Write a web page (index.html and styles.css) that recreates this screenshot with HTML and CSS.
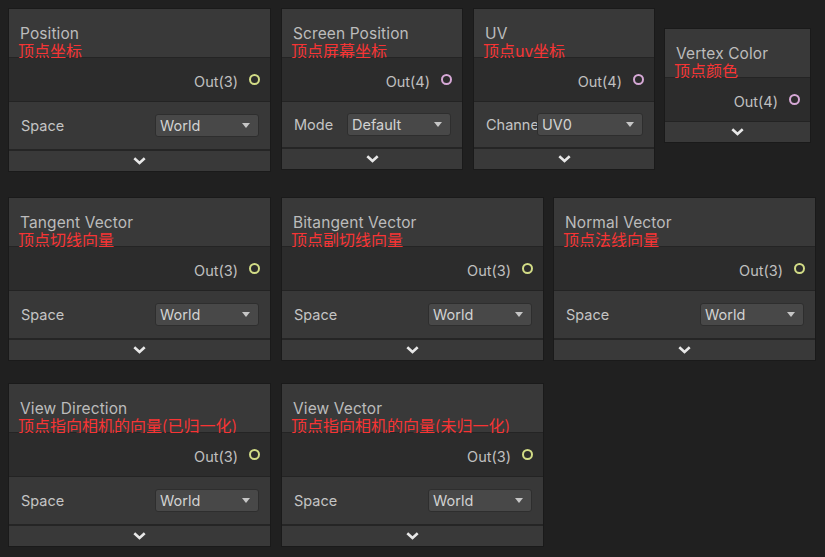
FILE: index.html
```html
<!DOCTYPE html>
<html>
<head>
<meta charset="utf-8">
<link rel="stylesheet" href="styles.css">
</head>
<body>
<div class="canvas">

  <div class="node n1">
    <div class="title"><div class="name">Position</div><div class="zh">顶点坐标</div></div>
    <div class="out"><span class="olabel">Out(3)</span><span class="port p3"></span></div>
    <div class="controls"><span class="clabel">Space</span><div class="dd"><span>World</span><svg class="arrow" width="8" height="5" viewBox="0 0 8 5"><polygon points="0,0 8,0 4,5"/></svg></div></div>
    <div class="expand"><svg width="13" height="8" viewBox="0 0 13 8"><polyline points="1.3,1.3 6.5,6 11.7,1.3"/></svg></div>
  </div>

  <div class="node n2">
    <div class="title"><div class="name">Screen Position</div><div class="zh">顶点屏幕坐标</div></div>
    <div class="out"><span class="olabel">Out(4)</span><span class="port p4"></span></div>
    <div class="controls short"><span class="clabel">Mode</span><div class="dd"><span>Default</span><svg class="arrow" width="8" height="5" viewBox="0 0 8 5"><polygon points="0,0 8,0 4,5"/></svg></div></div>
    <div class="expand"><svg width="13" height="8" viewBox="0 0 13 8"><polyline points="1.3,1.3 6.5,6 11.7,1.3"/></svg></div>
  </div>

  <div class="node n3">
    <div class="title"><div class="name">UV</div><div class="zh">顶点uv坐标</div></div>
    <div class="out"><span class="olabel">Out(4)</span><span class="port p4"></span></div>
    <div class="controls short"><span class="clabel">Channel</span><div class="dd wide"><span>UV0</span><svg class="arrow" width="8" height="5" viewBox="0 0 8 5"><polygon points="0,0 8,0 4,5"/></svg></div></div>
    <div class="expand"><svg width="13" height="8" viewBox="0 0 13 8"><polyline points="1.3,1.3 6.5,6 11.7,1.3"/></svg></div>
  </div>

  <div class="node n4">
    <div class="title"><div class="name">Vertex Color</div><div class="zh">顶点颜色</div></div>
    <div class="out"><span class="olabel">Out(4)</span><span class="port p4"></span></div>
    <div class="expand"><svg width="13" height="8" viewBox="0 0 13 8"><polyline points="1.3,1.3 6.5,6 11.7,1.3"/></svg></div>
  </div>

  <div class="node n5">
    <div class="title"><div class="name">Tangent Vector</div><div class="zh">顶点切线向量</div></div>
    <div class="out"><span class="olabel">Out(3)</span><span class="port p3"></span></div>
    <div class="controls"><span class="clabel">Space</span><div class="dd"><span>World</span><svg class="arrow" width="8" height="5" viewBox="0 0 8 5"><polygon points="0,0 8,0 4,5"/></svg></div></div>
    <div class="expand"><svg width="13" height="8" viewBox="0 0 13 8"><polyline points="1.3,1.3 6.5,6 11.7,1.3"/></svg></div>
  </div>

  <div class="node n6">
    <div class="title"><div class="name">Bitangent Vector</div><div class="zh">顶点副切线向量</div></div>
    <div class="out"><span class="olabel">Out(3)</span><span class="port p3"></span></div>
    <div class="controls"><span class="clabel">Space</span><div class="dd"><span>World</span><svg class="arrow" width="8" height="5" viewBox="0 0 8 5"><polygon points="0,0 8,0 4,5"/></svg></div></div>
    <div class="expand"><svg width="13" height="8" viewBox="0 0 13 8"><polyline points="1.3,1.3 6.5,6 11.7,1.3"/></svg></div>
  </div>

  <div class="node n7">
    <div class="title"><div class="name">Normal Vector</div><div class="zh">顶点法线向量</div></div>
    <div class="out"><span class="olabel">Out(3)</span><span class="port p3"></span></div>
    <div class="controls"><span class="clabel">Space</span><div class="dd"><span>World</span><svg class="arrow" width="8" height="5" viewBox="0 0 8 5"><polygon points="0,0 8,0 4,5"/></svg></div></div>
    <div class="expand"><svg width="13" height="8" viewBox="0 0 13 8"><polyline points="1.3,1.3 6.5,6 11.7,1.3"/></svg></div>
  </div>

  <div class="node n8">
    <div class="title"><div class="name">View Direction</div><div class="zh">顶点指向相机的向量(已归一化)</div></div>
    <div class="out"><span class="olabel">Out(3)</span><span class="port p3"></span></div>
    <div class="controls"><span class="clabel">Space</span><div class="dd"><span>World</span><svg class="arrow" width="8" height="5" viewBox="0 0 8 5"><polygon points="0,0 8,0 4,5"/></svg></div></div>
    <div class="expand"><svg width="13" height="8" viewBox="0 0 13 8"><polyline points="1.3,1.3 6.5,6 11.7,1.3"/></svg></div>
  </div>

  <div class="node n9">
    <div class="title"><div class="name">View Vector</div><div class="zh">顶点指向相机的向量(未归一化)</div></div>
    <div class="out"><span class="olabel">Out(3)</span><span class="port p3"></span></div>
    <div class="controls"><span class="clabel">Space</span><div class="dd"><span>World</span><svg class="arrow" width="8" height="5" viewBox="0 0 8 5"><polygon points="0,0 8,0 4,5"/></svg></div></div>
    <div class="expand"><svg width="13" height="8" viewBox="0 0 13 8"><polyline points="1.3,1.3 6.5,6 11.7,1.3"/></svg></div>
  </div>

</div>
</body>
</html>
```
FILE: styles.css
```css
html, body {
  margin: 0;
  padding: 0;
  background: #202020;
}
body {
  font-family: Inter, "Noto Sans", "Noto Sans CJK SC", sans-serif;
  color: #c2c2c2;
}
.canvas {
  position: relative;
  width: 825px;
  height: 557px;
  overflow: hidden;
}
.node {
  position: absolute;
  box-sizing: border-box;
  border: 1px solid #1a1a1a;
  background: #1a1a1a;
  display: flex;
  flex-direction: column;
}
.n1 { left: 8px; top: 8px; width: 263px; }
.n2 { left: 281px; top: 8px; width: 182px; }
.n3 { left: 473px; top: 8px; width: 182px; }
.n4 { left: 664px; top: 28px; width: 147px; }
.n5 { left: 8px; top: 197px; width: 263px; }
.n6 { left: 281px; top: 197px; width: 263px; }
.n7 { left: 553px; top: 197px; width: 263px; }
.n8 { left: 8px; top: 383px; width: 263px; }
.n9 { left: 281px; top: 383px; width: 263px; }

.title {
  box-sizing: border-box;
  height: 49px;
  background: #393939;
  border-bottom: 1px solid #242424;
  padding: 16px 0 0 11px;
  white-space: nowrap;
}
.name {
  font-size: 15.5px;
  line-height: 18px;
  color: #bcbcbc;
  letter-spacing: 0.1px;
}
.zh {
  font-family: "Noto Sans CJK SC", sans-serif;
  font-size: 16px;
  line-height: 16px;
  color: #f73434;
  margin-left: -2px;
  margin-top: -1px;
}
.out {
  box-sizing: border-box;
  height: 44px;
  background: #2c2c2c;
  border-bottom: 1px solid #232323;
  display: flex;
  align-items: center;
  justify-content: flex-end;
  padding: 4px 10px 0 0;
}
.olabel {
  font-size: 14.5px;
  color: #c0c0c0;
  margin-right: 11px;
}
.port {
  box-sizing: border-box;
  width: 11px;
  height: 11px;
  border-radius: 50%;
  border: 2px solid #d2dc86;
  margin-top: -4px;
}
.port.p4 { border-color: #d6a8d6; }
.controls {
  box-sizing: border-box;
  height: 49px;
  background: #383838;
  border-bottom: 2px solid #252525;
  display: flex;
  align-items: center;
  padding: 0 11px 0 12px;
}
.controls.short { height: 47px; }
.clabel {
  flex: 1;
  min-width: 0;
  overflow: hidden;
  white-space: nowrap;
  font-size: 14.5px;
  color: #c4c4c4;
}
.dd {
  flex: none;
  box-sizing: border-box;
  width: 104px;
  height: 23px;
  border: 1px solid #2e2e2e;
  border-radius: 3px;
  background: #484848;
  display: flex;
  align-items: center;
  justify-content: space-between;
  padding: 0 8px 0 4px;
  font-size: 14.5px;
  color: #d2d2d2;
}
.dd.wide { width: 106px; }
.arrow polygon { fill: #c6c6c6; }
.expand {
  height: 20px;
  background: #393939;
  display: flex;
  align-items: center;
  justify-content: center;
}
.expand svg polyline {
  fill: none;
  stroke: #e8e8e8;
  stroke-width: 2.6;
}
```
